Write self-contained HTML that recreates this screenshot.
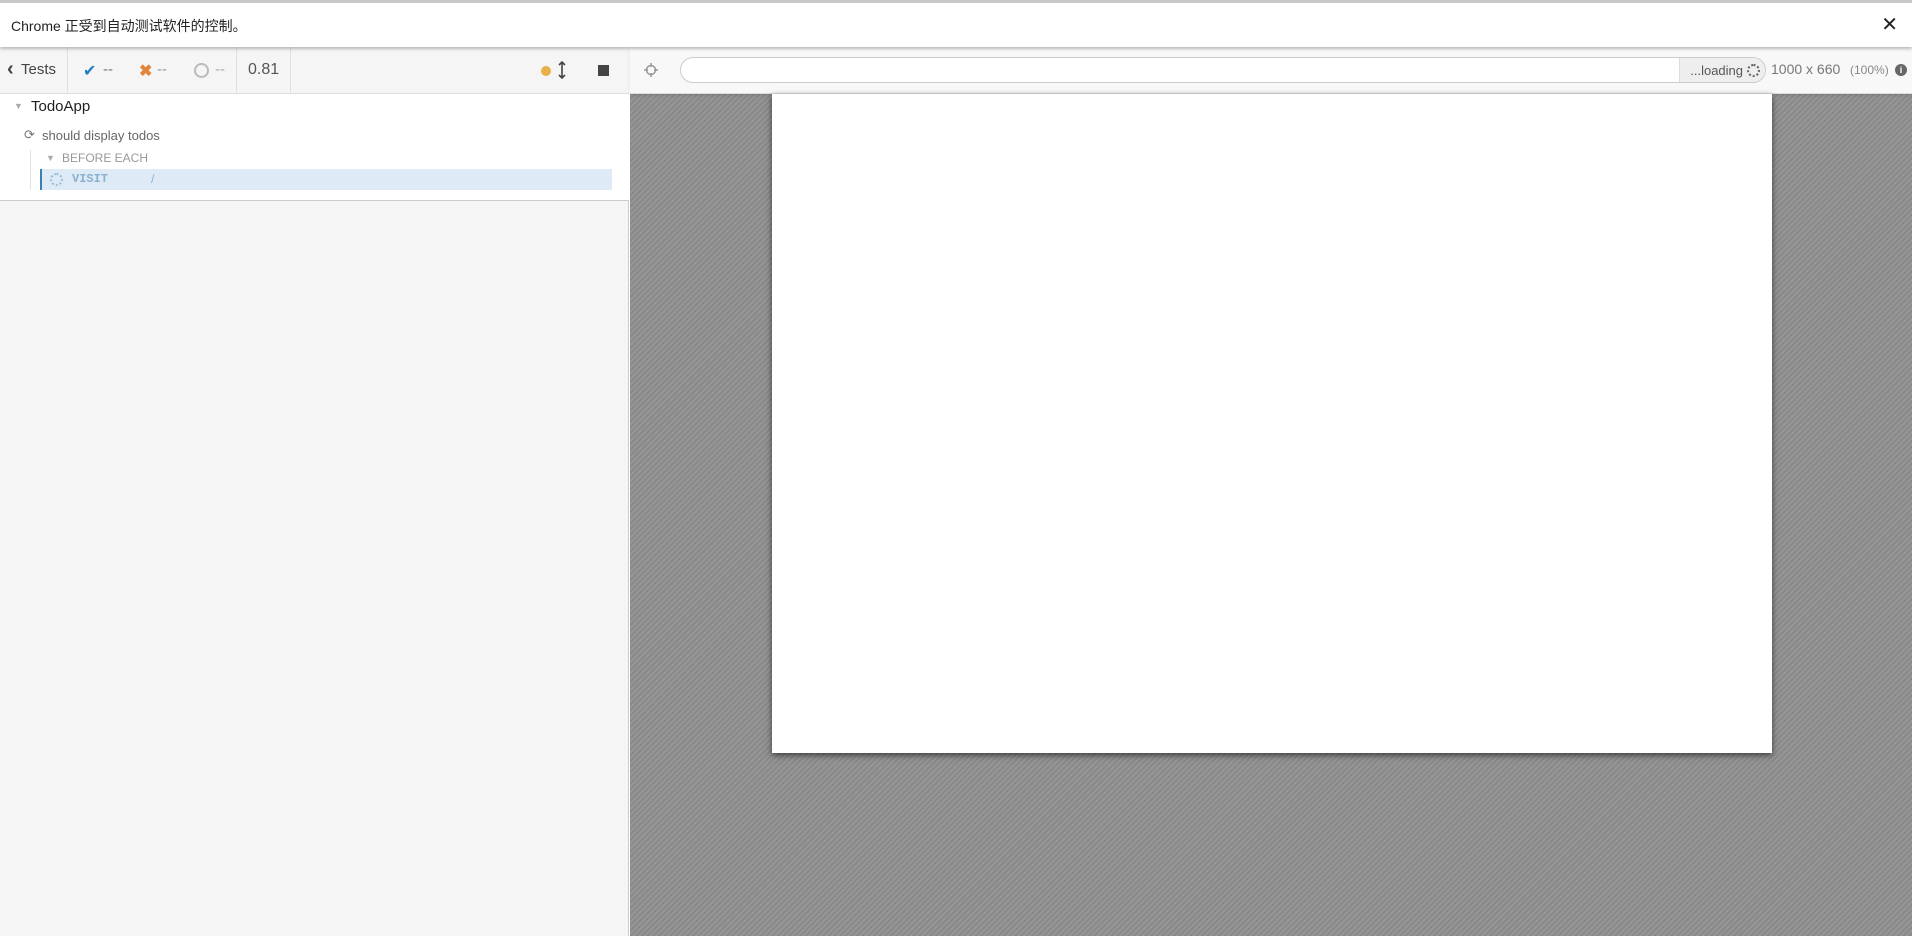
<!DOCTYPE html>
<html><head><meta charset="utf-8"><style>
*{box-sizing:border-box;margin:0;padding:0}
body{width:1912px;height:936px;overflow:hidden;font-family:"Liberation Sans","Noto Sans CJK SC",sans-serif;background:#fff;position:relative}
.abs{position:absolute}
#info{left:0;top:0;width:1912px;height:47px;background:#fff;border-top:3px solid #c8c8c8;box-shadow:0 2px 3px rgba(0,0,0,.25);z-index:5}
#info span{position:absolute;left:11px;top:13px;font-size:14px;color:#222}
#info .x{left:auto;right:14px;top:9px;font-size:20px}
#left{left:0;top:47px;width:629px;height:889px;background:#f5f5f5;border-right:1px solid #ccc}
#hdr{left:0;top:47px;width:629px;height:47px;background:#f5f5f5;border-bottom:1px solid #ddd}
.sep{top:0;width:1px;height:46px;background:#e0e0e0}
.t{font-size:15px;color:#555;top:14px}
#tree{left:0;top:94px;width:629px;height:107px;background:#fff;border-bottom:1px solid #ccc}
#right{left:630px;top:47px;width:1282px;height:889px;background:repeating-linear-gradient(135deg,#898989 0 2px,#969696 2px 4px)}
#rbar{left:630px;top:47px;width:1282px;height:47px;background:#f8f8f8;border-bottom:1px solid #ddd;box-shadow:0 1px 3px rgba(0,0,0,.15)}
#frame{left:772px;top:94px;width:1000px;height:659px;background:#fff;box-shadow:0 2px 6px rgba(0,0,0,.6)}
</style></head><body>
<div id="info" class="abs"><span>Chrome 正受到自动测试软件的控制。</span><span class="x">✕</span></div>
<div id="left" class="abs"></div>
<div id="hdr" class="abs">
 <span class="abs t" style="left:7px;top:11px;font-size:20px;font-weight:bold;color:#444">‹</span>
 <span class="abs t" style="left:21px;color:#444">Tests</span>
 <div class="abs sep" style="left:67px"></div>
 <span class="abs t" style="left:83px;color:#1d7fc1;font-size:16px">✔</span><span class="abs t" style="left:103px;color:#777">--</span>
 <span class="abs t" style="left:139px;color:#e2843a;font-size:16px;font-weight:bold">✖</span><span class="abs t" style="left:157px;color:#999">--</span>
 <div class="abs" style="left:194px;top:16px;width:15px;height:15px;border:2px solid #bbb;border-radius:50%"></div><span class="abs t" style="left:215px;color:#aaa">--</span>
 <div class="abs sep" style="left:236px"></div>
 <span class="abs t" style="left:248px;font-size:16px;color:#555">0.81</span>
 <div class="abs sep" style="left:290px"></div>
 <div class="abs" style="left:541px;top:19px;width:10px;height:10px;border-radius:50%;background:#e9b04a"></div>
 <svg class="abs" style="left:558px;top:14px" width="8" height="18" viewBox="0 0 8 18"><path d="M4 1V17M1 4L4 1L7 4M1 14L4 17L7 14" stroke="#444" stroke-width="1.6" fill="none"/></svg>
 <div class="abs" style="left:598px;top:18px;width:11px;height:11px;background:#444"></div>
</div>
<div id="tree" class="abs">
 <span class="abs" style="left:14px;top:7px;font-size:9px;color:#aaa">▼</span>
 <span class="abs" style="left:31px;top:4px;font-size:15px;color:#222">TodoApp</span>
 <span class="abs" style="left:24px;top:33px;font-size:13px;color:#777">⟳</span>
 <span class="abs" style="left:42px;top:34px;font-size:13px;color:#666">should display todos</span>
 <div class="abs" style="left:30px;top:56px;width:1px;height:40px;background:#e2e2e2"></div>
 <span class="abs" style="left:46px;top:59px;font-size:9px;color:#aaa">▼</span>
 <span class="abs" style="left:62px;top:57px;font-size:12px;color:#999">BEFORE EACH</span>
 <div class="abs" style="left:40px;top:75px;width:572px;height:21px;background:#deebf6;border-left:2px solid #3a80b5"></div>
 <div class="abs" style="left:50px;top:79px;width:13px;height:13px;border:2px dotted #9bbfdc;border-radius:50%"></div>
 <span class="abs" style="left:72px;top:78px;font-size:12px;font-weight:bold;color:#8ab0d0;font-family:'Liberation Mono',monospace">VISIT</span>
 <span class="abs" style="left:151px;top:78px;font-size:12px;color:#8ab0d0">/</span>
</div>
<div id="right" class="abs"></div>
<div id="rbar" class="abs">
 <svg class="abs" style="left:13px;top:15px" width="16" height="16" viewBox="0 0 16 16"><circle cx="8" cy="8" r="4.5" stroke="#999" stroke-width="1.5" fill="none"/><path d="M8 1V5M8 11V15M1 8H5M11 8H15" stroke="#999" stroke-width="1.5"/></svg>
 <div class="abs" style="left:50px;top:10px;width:1086px;height:26px;border:1px solid #ccc;border-radius:13px;background:#fff;overflow:hidden">
  <div class="abs" style="right:0;top:0;width:86px;height:26px;background:#eee;border-left:1px solid #ddd"></div>
  <span class="abs" style="right:22px;top:5px;font-size:13px;color:#555">...loading</span>
  <div class="abs" style="right:5px;top:6px;width:13px;height:13px;border:2px dotted #666;border-radius:50%"></div>
 </div>
 <span class="abs" style="left:1141px;top:14px;font-size:14px;color:#777">1000 x 660</span>
 <span class="abs" style="left:1220px;top:16px;font-size:12px;color:#888">(100%)</span>
 <div class="abs" style="left:1265px;top:17px;width:12px;height:12px;border-radius:50%;background:#666;color:#fff;font-size:9px;font-weight:bold;text-align:center;line-height:12px">i</div>
</div>
<div id="frame" class="abs"></div>
</body></html>
